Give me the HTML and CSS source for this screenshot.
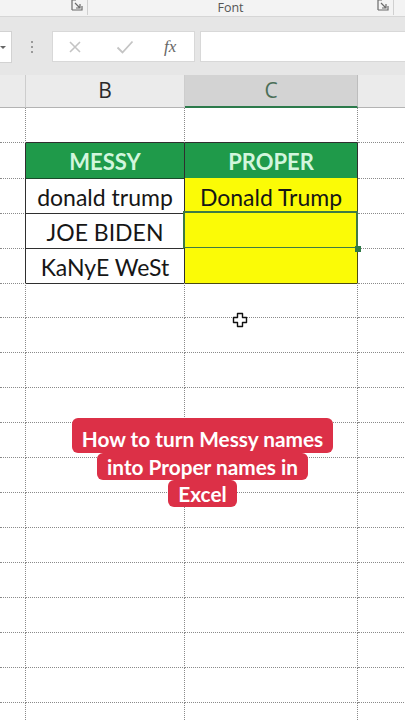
FILE: index.html
```html
<!DOCTYPE html>
<html>
<head>
<meta charset="utf-8">
<link rel="stylesheet" href="styles.css">
</head>
<body>
<div class="screen">
  <div class="ribbon">
    <div class="rib-left">
      <svg class="launcher" viewBox="0 0 12 12" width="12" height="12"><path d="M1 11V1h4M1 11h10V7" fill="none" stroke="#6b6b6b" stroke-width="1.2"/><path d="M4 4l5 5M9 5v4H5" fill="none" stroke="#6b6b6b" stroke-width="1.2"/></svg>
      <span class="sep"></span>
    </div>
    <div class="rib-title">Font</div>
    <div class="rib-right">
      <svg class="launcher" viewBox="0 0 12 12" width="12" height="12"><path d="M1 11V1h4M1 11h10V7" fill="none" stroke="#6b6b6b" stroke-width="1.2"/><path d="M4 4l5 5M9 5v4H5" fill="none" stroke="#6b6b6b" stroke-width="1.2"/></svg>
      <span class="sep"></span>
    </div>
  </div>

  <div class="fbar">
    <div class="namebox"><span class="tri"></span></div>
    <div class="grip"><i></i><i></i><i></i></div>
    <div class="fbtns">
      <svg class="ico-x" viewBox="0 0 14 14" width="14" height="14"><path d="M2 2l10 10M12 2L2 12" stroke="#c4c4c4" stroke-width="1.6" fill="none"/></svg>
      <svg class="ico-ok" viewBox="0 0 18 14" width="18" height="14"><path d="M1.5 7.5l5 5L16.5 1.5" stroke="#c4c4c4" stroke-width="1.8" fill="none"/></svg>
      <span class="fx">fx</span>
    </div>
    <div class="finput"></div>
  </div>

  <div class="sheet">
    <div class="hrow">
      <div class="hc"></div>
      <div class="hc">B</div>
      <div class="hc hsel">C</div>
      <div class="hc"></div>
    </div>

    <div class="row">
      <div class="c"></div><div class="c above"></div><div class="c above"></div><div class="c"></div>
    </div>
    <div class="row">
      <div class="c edge"></div><div class="c tb hd">MESSY</div><div class="c tb hd">PROPER</div><div class="c"></div>
    </div>
    <div class="row">
      <div class="c edge"></div><div class="c tb">donald trump</div><div class="c tb yl">Donald Trump</div><div class="c"></div>
    </div>
    <div class="row">
      <div class="c edge"></div><div class="c tb">JOE BIDEN</div><div class="c tb yl sel"></div><div class="c"></div>
    </div>
    <div class="row">
      <div class="c edge"></div><div class="c tb">KaNyE WeSt</div><div class="c tb yl"></div><div class="c"></div>
    </div>
    <div class="row"><div class="c"></div><div class="c"></div><div class="c"></div><div class="c"></div></div>
    <div class="row"><div class="c"></div><div class="c"></div><div class="c"></div><div class="c"></div></div>
    <div class="row"><div class="c"></div><div class="c"></div><div class="c"></div><div class="c"></div></div>
    <div class="row"><div class="c"></div><div class="c"></div><div class="c"></div><div class="c"></div></div>
    <div class="row"><div class="c"></div><div class="c"></div><div class="c"></div><div class="c"></div></div>
    <div class="row"><div class="c"></div><div class="c"></div><div class="c"></div><div class="c"></div></div>
    <div class="row"><div class="c"></div><div class="c"></div><div class="c"></div><div class="c"></div></div>
    <div class="row"><div class="c"></div><div class="c"></div><div class="c"></div><div class="c"></div></div>
    <div class="row"><div class="c"></div><div class="c"></div><div class="c"></div><div class="c"></div></div>
    <div class="row"><div class="c"></div><div class="c"></div><div class="c"></div><div class="c"></div></div>
    <div class="row"><div class="c"></div><div class="c"></div><div class="c"></div><div class="c"></div></div>
    <div class="row"><div class="c"></div><div class="c"></div><div class="c"></div><div class="c"></div></div>
    <div class="row"><div class="c"></div><div class="c"></div><div class="c"></div><div class="c"></div></div>

    <svg class="cursor" viewBox="0 0 16 16" width="16" height="16"><path d="M5.5 1.5h5v4h4v5h-4v4h-5v-4h-4v-5h4z" fill="#fff" stroke="#111" stroke-width="1.4" stroke-linejoin="round"/></svg>

    <div class="caption">
      <div class="cline first"><span>How to turn Messy names</span></div>
      <div class="cline"><span>into Proper names in</span></div>
      <div class="cline last"><span>Excel</span></div>
    </div>
  </div>
</div>
</body>
</html>
```

FILE: styles.css
```css
* { box-sizing: border-box; }
html, body { margin: 0; padding: 0; }
body { background: #fff; font-family: "Lato", "Liberation Sans", sans-serif; }

.screen { width: 405px; height: 720px; overflow: hidden; position: relative; }

/* Ribbon strip */
.ribbon {
  height: 17px;
  background: #f3f3f3;
  border-bottom: 1px solid #d6d6d6;
  display: flex;
  align-items: flex-start;
}
.rib-left { display: flex; align-items: flex-start; width: 88px; justify-content: flex-end; gap: 4px; }
.rib-right { display: flex; align-items: flex-start; margin-left: auto; gap: 4px; width: 28px; }
.launcher { margin-top: -1px; }
.sep { width: 1px; height: 15px; background: #d0d0d0; }
.rib-title {
  flex: 1;
  text-align: center;
  font-family: "Open Sans", "Liberation Sans", sans-serif;
  font-size: 12.5px;
  color: #555;
  line-height: 16px;
  padding-right: 4px;
}

/* Formula bar */
.fbar {
  height: 58px;
  background: #e6e6e6;
  display: flex;
  align-items: center;
  padding-top: 1px;
}
.namebox {
  width: 12px;
  height: 32px;
  background: #fff;
  border: 1px solid #d2d2d2;
  border-left: none;
  position: relative;
}
.tri {
  position: absolute;
  left: 0; top: 14px;
  border-left: 3px solid transparent;
  border-right: 3px solid transparent;
  border-top: 3px solid #666;
}
.grip { width: 40px; display: flex; flex-direction: column; align-items: center; gap: 3px; }
.grip i { display: block; width: 2px; height: 2px; background: #9a9a9a; }
.fbtns {
  width: 143px;
  height: 31px;
  background: #fff;
  border: 1px solid #d8d8d8;
  display: flex;
  align-items: center;
  padding-left: 15px;
}
.ico-x { margin-right: 34px; }
.ico-ok { margin-right: 30px; }
.fx {
  font-family: "Liberation Serif", "DejaVu Serif", serif;
  font-style: italic;
  font-size: 17px;
  color: #666;
}
.finput {
  flex: 1;
  height: 31px;
  margin-left: 5px;
  background: #fff;
  border: 1px solid #d8d8d8;
  border-right: none;
}

/* Sheet */
.sheet { position: relative; width: 460px; }
.hrow, .row {
  display: grid;
  grid-template-columns: 26px 159px 173px 102px;
}
.hrow { height: 33px; background: #ebebeb; }
.hc {
  border-right: 1px solid #cdcdcd;
  border-bottom: 1px solid #b3b3b3;
  text-align: center;
  font-family: "Open Sans", "Liberation Sans", sans-serif;
  font-size: 21px;
  line-height: 31px;
  color: #2a2a2a;
}
.hc.hsel {
  background: #d3d3d3;
  color: #4b6f57;
  border-bottom: 2px solid #2c7a4b;
  border-right-color: #bdbdbd;
}

.row { height: 35px; }
.c {
  border-right: 1px dotted #8a8a8a;
  border-bottom: 1px dotted #8a8a8a;
  text-align: center;
  font-size: 23px;
  line-height: 32px;
  padding-top: 3px;
  color: #161616;
  white-space: nowrap;
  position: relative;
}
.c.above { border-bottom: 1px solid #2f2f2f; }
.c.edge { border-right: 1px solid #2f2f2f; }
.c.tb { border-right: 1px solid #2f2f2f; border-bottom: 1px solid #2f2f2f; }
.c.hd {
  background: #1f9a4a;
  color: #d2f6dd;
  font-weight: 700;
  font-size: 22px;
  border-bottom-color: #1a4a2a;
}
.c.yl { background: #fbfb06; border-bottom-color: #4c4c12; border-right-color: #4c4c12; }
.c.sel::after {
  content: "";
  position: absolute;
  left: -2px; top: -2px; right: -1px; bottom: -1px;
  border: 2px solid #3e7a44;
}
.c.sel::before {
  content: "";
  position: absolute;
  right: -4px; bottom: -4px;
  width: 6px; height: 6px;
  background: #2f7a47;
  z-index: 2;
}

.cursor { position: absolute; left: 232px; top: 237px; }

/* Caption */
.caption {
  position: absolute;
  top: 343px;
  left: 0;
  width: 405px;
  text-align: center;
  font-family: "Lato", "Liberation Sans", sans-serif;
  font-weight: 700;
  font-size: 20.8px;
  color: #fff;
}
.cline { line-height: 27px; height: 27px; }
.cline span {
  display: inline-block;
  background: #dc3047;
  padding: 0 10px;
  border-radius: 6px;
  height: 27px;
}
.cline.first { height: 35px; }
.cline.first span { padding-top: 7px; height: 35px; }
```
